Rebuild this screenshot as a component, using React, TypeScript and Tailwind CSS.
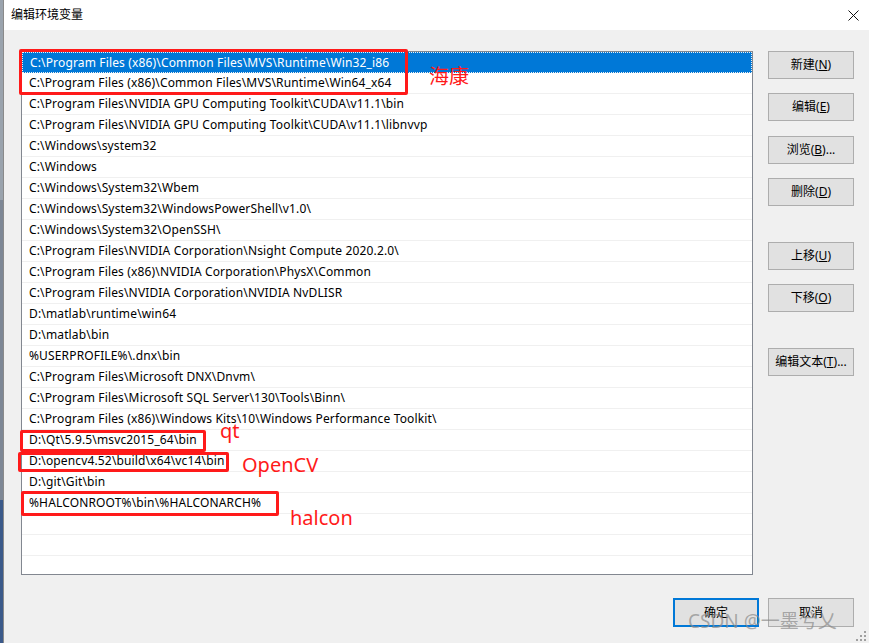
const paths = [
  "C:\\Program Files (x86)\\Common Files\\MVS\\Runtime\\Win32_i86",
  "C:\\Program Files (x86)\\Common Files\\MVS\\Runtime\\Win64_x64",
  "C:\\Program Files\\NVIDIA GPU Computing Toolkit\\CUDA\\v11.1\\bin",
  "C:\\Program Files\\NVIDIA GPU Computing Toolkit\\CUDA\\v11.1\\libnvvp",
  "C:\\Windows\\system32",
  "C:\\Windows",
  "C:\\Windows\\System32\\Wbem",
  "C:\\Windows\\System32\\WindowsPowerShell\\v1.0\\",
  "C:\\Windows\\System32\\OpenSSH\\",
  "C:\\Program Files\\NVIDIA Corporation\\Nsight Compute 2020.2.0\\",
  "C:\\Program Files (x86)\\NVIDIA Corporation\\PhysX\\Common",
  "C:\\Program Files\\NVIDIA Corporation\\NVIDIA NvDLISR",
  "D:\\matlab\\runtime\\win64",
  "D:\\matlab\\bin",
  "%USERPROFILE%\\.dnx\\bin",
  "C:\\Program Files\\Microsoft DNX\\Dnvm\\",
  "C:\\Program Files\\Microsoft SQL Server\\130\\Tools\\Binn\\",
  "C:\\Program Files (x86)\\Windows Kits\\10\\Windows Performance Toolkit\\",
  "D:\\Qt\\5.9.5\\msvc2015_64\\bin",
  "D:\\opencv4.52\\build\\x64\\vc14\\bin",
  "D:\\git\\Git\\bin",
  "%HALCONROOT%\\bin\\%HALCONARCH%",
  "",
  "",
  "",
]

const font = { fontFamily: '"Noto Sans", "Noto Sans CJK SC", sans-serif' }

function Btn({ label, hot, tail, className = "" }: { label: string; hot: string; tail?: string; className?: string }) {
  return (
    <button
      className={`flex h-[28px] w-[86px] items-center justify-center border border-[#adadad] bg-[#e1e1e1] text-[12px] text-black ${className}`}
    >
      {label}(<span className="underline">{hot}</span>){tail}
    </button>
  )
}

function RedBox({ className }: { className: string }) {
  return <div className={`pointer-events-none absolute rounded-[2px] border-[3px] border-[#ff1a1a] ${className}`} />
}

function RedLabel({ text, className }: { text: string; className: string }) {
  return (
    <div className={`pointer-events-none absolute text-[20px] leading-none text-[#ff1a1a] ${className}`}>{text}</div>
  )
}

export default function App() {
  return (
    <div className="relative flex h-[643px] w-[869px] overflow-hidden bg-[#f0f0f0]" style={font}>
      <div className="flex w-[3px] flex-col">
        <div className="h-[200px] bg-[#9aa3ad]" />
        <div className="h-[300px] bg-[#7d8795]" />
        <div className="flex-1 bg-[#3b5a8a]" />
      </div>

      <div className="flex flex-1 flex-col border-l border-[#8a8a8a]">
        {/* title bar */}
        <div className="flex h-[30px] items-center justify-between bg-white pl-[7px] pr-[10px]">
          <span className="text-[12px] text-black">编辑环境变量</span>
          <svg width="11" height="11" viewBox="0 0 11 11" fill="none" stroke="#111" strokeWidth="1">
            <line x1="0.5" y1="0.5" x2="10.5" y2="10.5" />
            <line x1="10.5" y1="0.5" x2="0.5" y2="10.5" />
          </svg>
        </div>

        {/* body */}
        <div className="flex flex-1 flex-col pl-[17px] pr-[15px] pt-[21px]">
          <div className="flex">
            <div className="h-[524px] w-[732px] overflow-hidden border border-[#828790] bg-white">
              {paths.map((p, i) => (
                <div
                  key={i}
                  className={`flex h-[21px] items-center border-b border-[#f0f0f0] pl-[7px] text-[12px] tracking-[0.15px] whitespace-nowrap ${
                    i === 0 ? "border border-dotted border-[#f0a050] bg-[#0078d7] text-white" : "text-black"
                  }`}
                >
                  {p}
                </div>
              ))}
            </div>

            <div className="ml-[15px] flex flex-col">
              <Btn label="新建" hot="N" className="mt-[0px]" />
              <Btn label="编辑" hot="E" className="mt-[14px]" />
              <Btn label="浏览" hot="B" tail="..." className="mt-[15px]" />
              <Btn label="删除" hot="D" className="mt-[14px]" />
              <Btn label="上移" hot="U" className="mt-[36px]" />
              <Btn label="下移" hot="O" className="mt-[14px]" />
              <Btn label="编辑文本" hot="T" tail="..." className="mt-[36px]" />
            </div>
          </div>

          <div className="mt-[23px] flex justify-end gap-[9px]">
            <button className="flex h-[29px] w-[86px] items-center justify-center border-2 border-[#0078d7] bg-[#e1e1e1] text-[12px] text-black">
              确定
            </button>
            <button className="flex h-[29px] w-[86px] items-center justify-center border border-[#adadad] bg-[#e1e1e1] text-[12px] text-black">
              取消
            </button>
          </div>
        </div>
      </div>

      {/* annotations */}
      <RedBox className="left-[19px] top-[49px] h-[46px] w-[389px]" />
      <RedLabel text="海康" className="left-[429px] top-[67px]" />
      <RedBox className="left-[20px] top-[430px] h-[22px] w-[186px]" />
      <RedLabel text="qt" className="left-[220px] top-[421px]" />
      <RedBox className="left-[18px] top-[452px] h-[20px] w-[211px]" />
      <RedLabel text="OpenCV" className="left-[242px] top-[455px]" />
      <RedBox className="left-[21px] top-[491px] h-[25px] w-[258px]" />
      <RedLabel text="halcon" className="left-[290px] top-[508px]" />

      {/* watermark */}
      <div className="pointer-events-none absolute left-[688px] top-[612px] text-[19px] leading-none text-[#8a8a8a]/70">
        CSDN @一墨兮乂
      </div>

      {/* size grip */}
      <svg className="absolute bottom-[1px] right-[2px]" width="11" height="11" viewBox="0 0 11 11" fill="#a0a0a0">
        <rect x="8" y="0" width="2" height="2" />
        <rect x="4" y="4" width="2" height="2" />
        <rect x="8" y="4" width="2" height="2" />
        <rect x="0" y="8" width="2" height="2" />
        <rect x="4" y="8" width="2" height="2" />
        <rect x="8" y="8" width="2" height="2" />
      </svg>
    </div>
  )
}
